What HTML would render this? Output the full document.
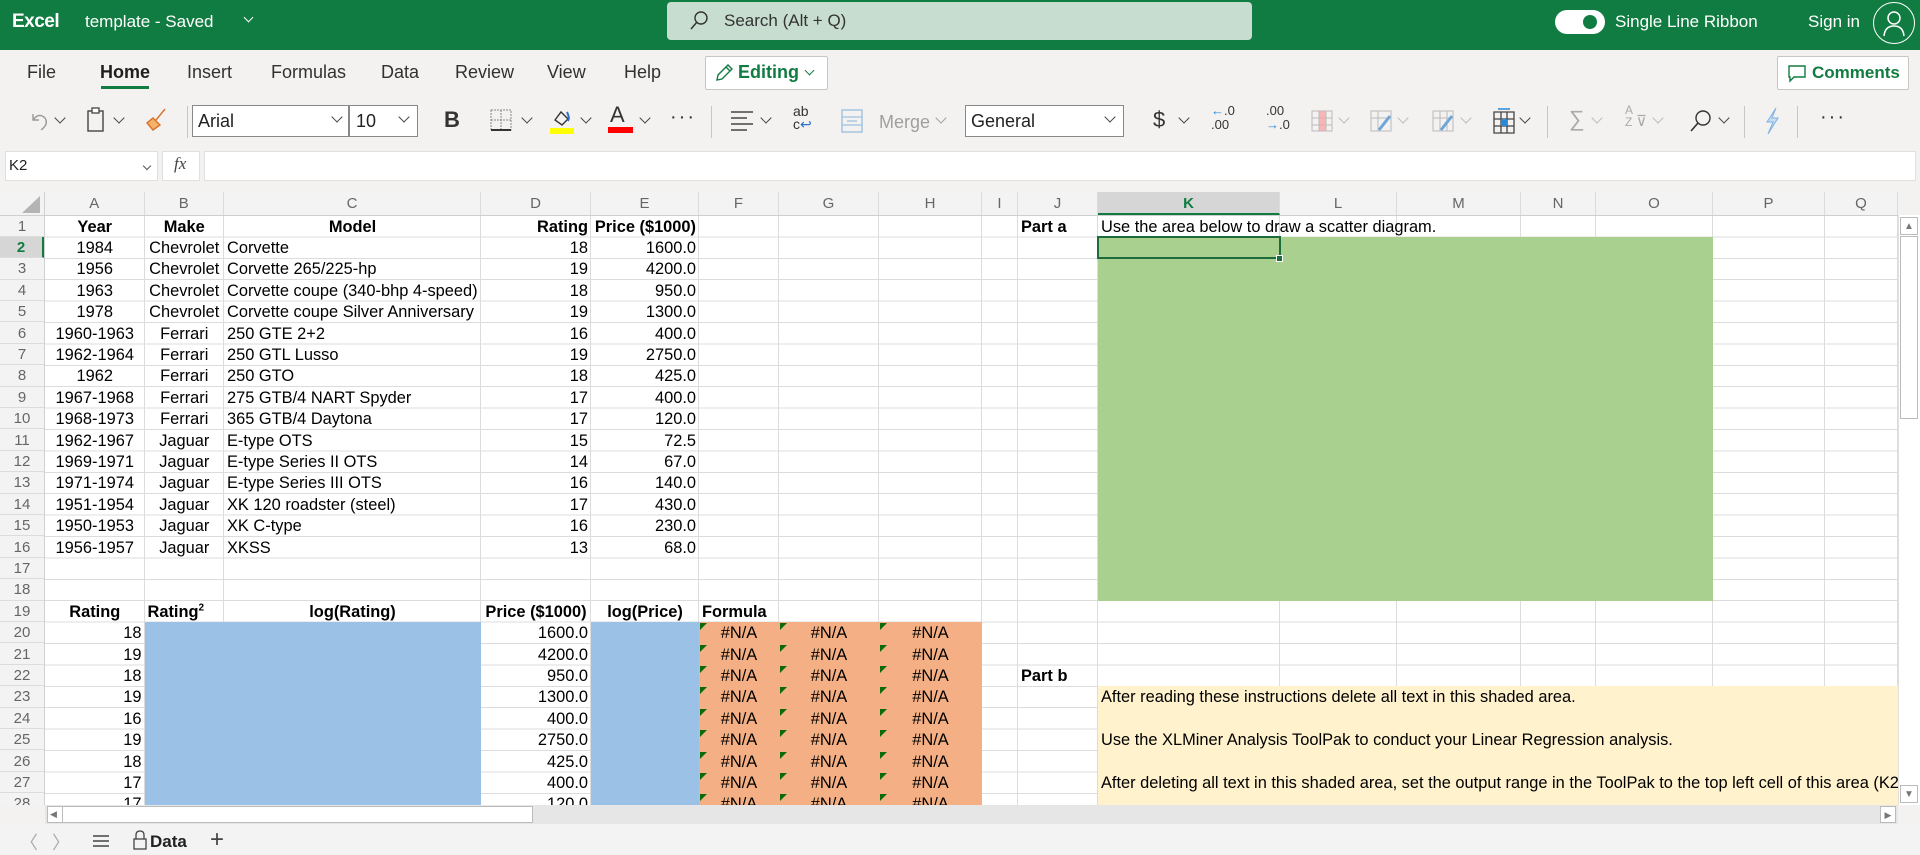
<!DOCTYPE html>
<html><head><meta charset="utf-8">
<style>
*{box-sizing:border-box;margin:0;padding:0}
body{width:1920px;height:853px;overflow:hidden;background:#f3f2f1;font-family:"Liberation Sans",Arial,sans-serif;position:relative}
.abs{position:absolute}
#top{left:0;top:0;width:1920px;height:50px;background:#117c41;color:#fff}
#tabs{left:0;top:50px;width:1920px;height:48px;background:#f3f2f1}
.tab{position:absolute;top:62px;font-size:18px;color:#323130}
#tb{left:0;top:98px;width:1920px;height:47px;background:#f3f2f1;box-shadow:0 2px 3px rgba(0,0,0,.12)}
.ic{position:absolute;color:#444;font-size:16px}
.chev{position:absolute;top:114px;width:8px;height:8px;border-right:1.5px solid #444;border-bottom:1.5px solid #444;transform:rotate(45deg)}
.sep{position:absolute;top:106px;width:1px;height:32px;background:#c8c6c4}
#grid{left:45px;top:215.5px;width:1853px;height:589.5px;overflow:hidden;background-color:#fff;background-image:repeating-linear-gradient(to bottom,transparent 0,transparent 20.4px,#dcdcdc 20.4px,#dcdcdc 21.4px)}
.vl{position:absolute;top:0;width:1px;height:600px;background:#dcdcdc}
.f{position:absolute}
.r{position:absolute;left:0;height:21.4px;width:1853px;font-size:16.4px;line-height:22px;color:#000;white-space:nowrap}
.r span{position:absolute;top:0;height:21.4px;overflow:hidden;padding:0 3px}
.A{left:0;width:99.5px}.B{left:99.5px;width:79.5px}.C{left:179px;width:257px}.D{left:436px;width:110px}.E{left:546px;width:108px}
.F{left:654px;width:80px}.G{left:734px;width:100px}.H{left:834px;width:103px}.J{left:973px;width:80px}.K{left:1053px;width:800px;overflow:visible!important}
.c{text-align:center}.rt{text-align:right}.b{font-weight:bold}
.na{text-align:center}
.na:before{content:"";position:absolute;left:1px;top:1px;border-top:7px solid #0b6a0b;border-right:7px solid transparent}
#rh{left:0;top:215.5px;width:45px;height:589.5px;overflow:hidden;background:#f3f3f3;border-right:1px solid #d0d0d0}
.rn{position:absolute;left:0;width:44px;height:21.4px;line-height:22px;text-align:center;font-size:15px;color:#666;border-bottom:1px solid #dcdcdc}
#ch{left:45px;top:192px;width:1853px;height:23.5px;background:#f3f3f3;border-bottom:1px solid #cfcfcf;overflow:hidden}
.cl{position:absolute;top:0;height:23px;line-height:23px;text-align:center;font-size:15px;color:#666;border-right:1px solid #dcdcdc}
</style></head><body>

<div id="top" class="abs">
 <div class="abs" style="left:12px;top:11px;font-size:19px;font-weight:bold;letter-spacing:-0.5px">Excel</div>
 <div class="abs" style="left:85px;top:12px;font-size:17px">template - Saved</div>
 <div class="abs" style="left:245px;top:14px;width:7px;height:7px;border-right:1.3px solid #fff;border-bottom:1.3px solid #fff;transform:rotate(45deg)"></div>
 <div class="abs" style="left:667px;top:2px;width:585px;height:38px;background:#c7ddd0;border-radius:4px"></div>
 <svg class="abs" style="left:688px;top:10px" width="22" height="22" viewBox="0 0 22 22"><circle cx="13" cy="8" r="6" fill="none" stroke="#333" stroke-width="1.4"/><path d="M9 12 L3 19" stroke="#333" stroke-width="1.5"/></svg>
 <div class="abs" style="left:724px;top:11px;font-size:17px;color:#333">Search (Alt + Q)</div>
 <div class="abs" style="left:1555px;top:10px;width:50px;height:24px;background:#fff;border-radius:12px"></div>
 <div class="abs" style="left:1583px;top:15px;width:14px;height:14px;background:#117c41;border-radius:7px"></div>
 <div class="abs" style="left:1615px;top:12px;font-size:17px">Single Line Ribbon</div>
 <div class="abs" style="left:1808px;top:12px;font-size:17px">Sign in</div>
 <div class="abs" style="left:1873px;top:2px;width:42px;height:42px;border:1.5px solid #fff;border-radius:50%"></div>
 <svg class="abs" style="left:1881px;top:9px" width="26" height="30" viewBox="0 0 26 30"><circle cx="13" cy="9" r="6" fill="none" stroke="#fff" stroke-width="1.5"/><path d="M3 27 Q4 17 13 17 Q22 17 23 27" fill="none" stroke="#fff" stroke-width="1.5"/></svg>
</div>

<div id="tabs" class="abs"></div>
<div class="tab" style="left:27px">File</div>
<div class="tab" style="left:100px;font-weight:bold;color:#201f1e">Home</div>
<div class="abs" style="left:101px;top:86px;width:48px;height:3px;background:#117c41"></div>
<div class="tab" style="left:187px">Insert</div>
<div class="tab" style="left:271px">Formulas</div>
<div class="tab" style="left:381px">Data</div>
<div class="tab" style="left:455px">Review</div>
<div class="tab" style="left:547px">View</div>
<div class="tab" style="left:624px">Help</div>
<div class="abs" style="left:705px;top:56px;width:123px;height:34px;background:#fff;border:1px solid #c8c6c4;border-radius:2px"></div>
<svg class="abs" style="left:714px;top:63px" width="20" height="20" viewBox="0 0 20 20"><path d="M3 17 L4 12 L14 2 L18 6 L8 16 Z M12 4 L16 8" fill="none" stroke="#117c41" stroke-width="1.4"/></svg>
<div class="abs" style="left:738px;top:62px;font-size:18px;font-weight:bold;color:#117c41">Editing</div>
<div class="abs" style="left:806px;top:67px;width:7px;height:7px;border-right:1.3px solid #117c41;border-bottom:1.3px solid #117c41;transform:rotate(45deg)"></div>
<div class="abs" style="left:1777px;top:56px;width:132px;height:34px;background:#fff;border:1px solid #c8c6c4;border-radius:2px"></div>
<svg class="abs" style="left:1787px;top:64px" width="20" height="20" viewBox="0 0 20 20"><path d="M2 2 H18 V13 H7 L3 17 V13 H2 Z" fill="none" stroke="#117c41" stroke-width="1.4"/></svg>
<div class="abs" style="left:1812px;top:63px;font-size:17px;font-weight:bold;color:#117c41">Comments</div>

<div id="tb" class="abs"></div>
<svg class="abs" style="left:25px;top:108px" width="26" height="26" viewBox="0 0 26 26"><path d="M8 6 L8 12 L14 12 M8 12 Q14 4 20 10 Q24 16 16 22" fill="none" stroke="#999" stroke-width="1.4"/></svg>
<div class="chev" style="left:56px"></div>
<svg class="abs" style="left:84px;top:106px" width="24" height="28" viewBox="0 0 24 28"><rect x="4" y="5" width="15" height="20" fill="none" stroke="#444" stroke-width="1.4"/><rect x="8" y="2" width="7" height="5" fill="#fff" stroke="#444" stroke-width="1.3"/></svg>
<div class="chev" style="left:115px"></div>
<svg class="abs" style="left:143px;top:106px" width="28" height="28" viewBox="0 0 28 28"><path d="M22 3 L13 14 M10 12 L17 19 L10 24 L4 17 Z" fill="#f3b26a" stroke="#d9712a" stroke-width="1.4"/></svg>
<div class="sep" style="left:187px"></div>
<div class="abs" style="left:192px;top:105px;width:157px;height:32px;background:#fff;border:1px solid #8a8886"></div>
<div class="abs" style="left:198px;top:111px;font-size:18px;color:#222">Arial</div>
<div class="chev" style="left:333px;top:113px"></div>
<div class="abs" style="left:349px;top:105px;width:69px;height:32px;background:#fff;border:1px solid #8a8886"></div>
<div class="abs" style="left:356px;top:111px;font-size:18px;color:#222">10</div>
<div class="chev" style="left:400px;top:113px"></div>
<div class="abs" style="left:444px;top:107px;font-size:22px;font-weight:bold;color:#333">B</div>
<svg class="abs" style="left:489px;top:108px" width="24" height="24" viewBox="0 0 24 24"><path d="M2 2 H22 V22 H2 Z M12 2 V22 M2 12 H22" fill="none" stroke="#888" stroke-width="1" stroke-dasharray="2 1"/><path d="M2 22 H22" stroke="#333" stroke-width="2"/></svg>
<div class="chev" style="left:523px"></div>
<svg class="abs" style="left:549px;top:106px" width="26" height="28" viewBox="0 0 26 28"><path d="M6 14 L12 6 L19 13 L13 19 Z" fill="none" stroke="#333" stroke-width="1.4"/><path d="M18 6 Q21 12 19 15" stroke="#2a6fc9" stroke-width="2" fill="none"/><rect x="1" y="22" width="24" height="6" fill="#ffff00"/></svg>
<div class="chev" style="left:582px"></div>
<div class="abs" style="left:610px;top:102px;font-size:22px;color:#333">A</div>
<div class="abs" style="left:608px;top:127px;width:25px;height:6px;background:#ff0000"></div>
<div class="chev" style="left:641px"></div>
<div class="abs" style="left:670px;top:106px;font-size:20px;color:#333;letter-spacing:2px">···</div>
<div class="sep" style="left:711px"></div>
<svg class="abs" style="left:730px;top:110px" width="24" height="22" viewBox="0 0 24 22"><path d="M1 2 H23 M1 8 H17 M1 14 H23 M1 20 H17" stroke="#444" stroke-width="1.5"/></svg>
<div class="chev" style="left:762px"></div>
<div class="abs" style="left:793px;top:105px;font-size:14px;line-height:13px;color:#333">ab<br>c<span style="color:#2a6fc9">↩</span></div>
<svg class="abs" style="left:840px;top:108px" width="24" height="26" viewBox="0 0 24 26"><rect x="2" y="2" width="20" height="22" fill="none" stroke="#9fc2e0" stroke-width="1.4"/><path d="M2 9 H22 M2 17 H22 M7 13 H17" stroke="#9fc2e0" stroke-width="1.3"/></svg>
<div class="abs" style="left:879px;top:112px;font-size:18px;color:#a19f9d">Merge</div>
<div class="chev" style="left:937px;border-color:#a19f9d"></div>
<div class="abs" style="left:965px;top:105px;width:159px;height:32px;background:#fff;border:1px solid #8a8886"></div>
<div class="abs" style="left:971px;top:111px;font-size:18px;color:#222">General</div>
<div class="chev" style="left:1106px;top:113px"></div>
<div class="abs" style="left:1153px;top:107px;font-size:22px;color:#333">$</div>
<div class="chev" style="left:1180px"></div>
<div class="abs" style="left:1211px;top:104px;font-size:13px;line-height:14px;color:#333"><span style="color:#2a8ad8">←</span>.0<br>.00</div>
<div class="abs" style="left:1266px;top:104px;font-size:13px;line-height:14px;color:#333">.00<br><span style="color:#2a8ad8">→</span>.0</div>
<svg class="abs" style="left:1311px;top:110px" width="22" height="22" viewBox="0 0 22 22"><path d="M1 1 H21 V21 H1 Z M1 8 H21 M1 15 H21 M8 1 V21 M15 1 V21" fill="none" stroke="#bbb"/><rect x="8" y="1" width="7" height="20" fill="#f4a8a8" opacity=".8"/></svg>
<div class="chev" style="left:1340px;border-color:#bbb"></div>
<svg class="abs" style="left:1370px;top:110px" width="24" height="24" viewBox="0 0 24 24"><path d="M1 1 H21 V21 H1 Z M1 8 H21 M8 1 V21" fill="none" stroke="#bbb"/><path d="M20 6 L9 20" stroke="#6fa6d8" stroke-width="3"/></svg>
<div class="chev" style="left:1399px;border-color:#bbb"></div>
<svg class="abs" style="left:1432px;top:110px" width="24" height="24" viewBox="0 0 24 24"><path d="M1 1 H21 V21 H1 Z M1 8 H21 M8 1 V21 M15 1 V21" fill="none" stroke="#bbb"/><path d="M20 6 L9 20" stroke="#6fa6d8" stroke-width="3"/></svg>
<div class="chev" style="left:1462px;border-color:#bbb"></div>
<svg class="abs" style="left:1492px;top:107px" width="24" height="28" viewBox="0 0 24 28"><path d="M2 5 H22 V26 H2 Z M2 12 H22 M2 19 H22 M9 5 V26 M15 5 V26" fill="none" stroke="#444" stroke-width="1.3"/><rect x="9" y="12" width="6" height="7" fill="#2a8ad8"/><path d="M6 2 H18" stroke="#2a8ad8" stroke-width="1.5"/></svg>
<div class="chev" style="left:1521px"></div>
<div class="sep" style="left:1547px"></div>
<div class="abs" style="left:1569px;top:106px;font-size:22px;color:#aaa">∑</div>
<div class="chev" style="left:1593px;border-color:#bbb"></div>
<div class="abs" style="left:1625px;top:104px;font-size:12px;line-height:12px;color:#aaa">A<br>Z</div>
<div class="abs" style="left:1636px;top:112px;font-size:15px;color:#aaa">⊽</div>
<div class="chev" style="left:1654px;border-color:#bbb"></div>
<svg class="abs" style="left:1688px;top:108px" width="26" height="26" viewBox="0 0 26 26"><circle cx="15" cy="10" r="7" fill="none" stroke="#333" stroke-width="1.4"/><path d="M10 15 L3 23" stroke="#333" stroke-width="1.6"/></svg>
<div class="chev" style="left:1720px"></div>
<div class="sep" style="left:1744px"></div>
<svg class="abs" style="left:1762px;top:106px" width="20" height="30" viewBox="0 0 20 30"><path d="M14 2 L5 16 H11 L6 28 L16 12 H10 Z" fill="#c8ddf3" stroke="#7fb0e0" stroke-width="1"/></svg>
<div class="sep" style="left:1797px"></div>
<div class="abs" style="left:1820px;top:106px;font-size:20px;color:#333;letter-spacing:2px">···</div>

<div class="abs" style="left:0;top:145px;width:1920px;height:47px;background:#f3f2f1"></div>
<div class="abs" style="left:5px;top:151px;width:153px;height:30px;background:#fff;border:1px solid #e1dfdd"></div>
<div class="abs" style="left:9px;top:157px;font-size:15px;color:#222">K2</div>
<div class="abs" style="left:144px;top:163px;width:6px;height:6px;border-right:1.2px solid #555;border-bottom:1.2px solid #555;transform:rotate(45deg)"></div>
<div class="abs" style="left:162px;top:151px;width:38px;height:30px;background:#fff;border:1px solid #e1dfdd"></div>
<div class="abs" style="left:174px;top:154px;font-size:17px;font-style:italic;font-family:'Liberation Serif',serif;color:#444">fx</div>
<div class="abs" style="left:204px;top:151px;width:1712px;height:30px;background:#fff;border:1px solid #e1dfdd"></div>

<div class="abs" style="left:0;top:192px;width:45px;height:23.5px;background:#f3f3f3;border-right:1px solid #d0d0d0;border-bottom:1px solid #cfcfcf"></div>
<svg class="abs" style="left:22px;top:196px" width="20" height="18"><path d="M18 0 V17 H0 Z" fill="#b4b4b4"/></svg>
<div id="ch" class="abs">
<div class="cl" style="left:0;width:99.5px">A</div><div class="cl" style="left:99.5px;width:79.5px">B</div><div class="cl" style="left:179px;width:257px">C</div><div class="cl" style="left:436px;width:110px">D</div><div class="cl" style="left:546px;width:108px">E</div><div class="cl" style="left:654px;width:80px">F</div><div class="cl" style="left:734px;width:100px">G</div><div class="cl" style="left:834px;width:103px">H</div><div class="cl" style="left:937px;width:36px">I</div><div class="cl" style="left:973px;width:80px">J</div>
<div class="cl" style="left:1053px;width:182px;background:#d6d6d6;color:#117c41;font-weight:bold;border-bottom:2px solid #117c41">K</div>
<div class="cl" style="left:1235px;width:117px">L</div><div class="cl" style="left:1352px;width:124px">M</div><div class="cl" style="left:1476px;width:75px">N</div><div class="cl" style="left:1551px;width:117px">O</div><div class="cl" style="left:1668px;width:112px">P</div><div class="cl" style="left:1780px;width:73px">Q</div>
</div>

<div id="rh" class="abs">
<div class="rn" style="top:0">1</div>
<div class="rn" style="top:21.4px;background:#d6d6d6;color:#117c41;font-weight:bold;border-right:2px solid #117c41">2</div>
<div class="rn" style="top:42.8px">3</div><div class="rn" style="top:64.2px">4</div><div class="rn" style="top:85.6px">5</div><div class="rn" style="top:107px">6</div><div class="rn" style="top:128.4px">7</div><div class="rn" style="top:149.8px">8</div><div class="rn" style="top:171.2px">9</div><div class="rn" style="top:192.6px">10</div><div class="rn" style="top:214px">11</div><div class="rn" style="top:235.4px">12</div><div class="rn" style="top:256.8px">13</div><div class="rn" style="top:278.2px">14</div><div class="rn" style="top:299.6px">15</div><div class="rn" style="top:321px">16</div><div class="rn" style="top:342.4px">17</div><div class="rn" style="top:363.8px">18</div><div class="rn" style="top:385.2px">19</div><div class="rn" style="top:406.6px">20</div><div class="rn" style="top:428px">21</div><div class="rn" style="top:449.4px">22</div><div class="rn" style="top:470.8px">23</div><div class="rn" style="top:492.2px">24</div><div class="rn" style="top:513.6px">25</div><div class="rn" style="top:535px">26</div><div class="rn" style="top:556.4px">27</div><div class="rn" style="top:577.8px">28</div>
</div>

<div id="grid" class="abs">
<div class="vl" style="left:98.5px"></div><div class="vl" style="left:178px"></div><div class="vl" style="left:435px"></div><div class="vl" style="left:545px"></div><div class="vl" style="left:653px"></div><div class="vl" style="left:733px"></div><div class="vl" style="left:833px"></div><div class="vl" style="left:936px"></div><div class="vl" style="left:972px"></div><div class="vl" style="left:1052px"></div><div class="vl" style="left:1234px"></div><div class="vl" style="left:1351px"></div><div class="vl" style="left:1475px"></div><div class="vl" style="left:1550px"></div><div class="vl" style="left:1667px"></div><div class="vl" style="left:1779px"></div><div class="vl" style="left:1852px"></div>
<div class="f" style="left:1053px;top:21.4px;width:615px;height:363.8px;background:#a9d08e"></div>
<div class="f" style="left:1053px;top:470.8px;width:800px;height:130px;background:#fff2cc"></div>
<div class="f" style="left:99.5px;top:406.6px;width:336.5px;height:200px;background:#9bc2e6"></div>
<div class="f" style="left:546px;top:406.6px;width:108px;height:200px;background:#9bc2e6"></div>
<div class="f" style="left:654px;top:406.6px;width:283px;height:200px;background:#f4b084"></div>

<div class="r" style="top:0"><span class="A c b">Year</span><span class="B c b">Make</span><span class="C c b">Model</span><span class="D rt b">Rating</span><span class="E rt b">Price ($1000)</span><span class="J b">Part a</span><span class="K">Use the area below to draw a scatter diagram.</span></div>
<div class="r" style="top:21.4px"><span class="A c">1984</span><span class="B c">Chevrolet</span><span class="C">Corvette</span><span class="D rt">18</span><span class="E rt">1600.0</span></div>
<div class="r" style="top:42.8px"><span class="A c">1956</span><span class="B c">Chevrolet</span><span class="C">Corvette 265/225-hp</span><span class="D rt">19</span><span class="E rt">4200.0</span></div>
<div class="r" style="top:64.2px"><span class="A c">1963</span><span class="B c">Chevrolet</span><span class="C">Corvette coupe (340-bhp 4-speed)</span><span class="D rt">18</span><span class="E rt">950.0</span></div>
<div class="r" style="top:85.6px"><span class="A c">1978</span><span class="B c">Chevrolet</span><span class="C">Corvette coupe Silver Anniversary</span><span class="D rt">19</span><span class="E rt">1300.0</span></div>
<div class="r" style="top:107px"><span class="A c">1960-1963</span><span class="B c">Ferrari</span><span class="C">250 GTE 2+2</span><span class="D rt">16</span><span class="E rt">400.0</span></div>
<div class="r" style="top:128.4px"><span class="A c">1962-1964</span><span class="B c">Ferrari</span><span class="C">250 GTL Lusso</span><span class="D rt">19</span><span class="E rt">2750.0</span></div>
<div class="r" style="top:149.8px"><span class="A c">1962</span><span class="B c">Ferrari</span><span class="C">250 GTO</span><span class="D rt">18</span><span class="E rt">425.0</span></div>
<div class="r" style="top:171.2px"><span class="A c">1967-1968</span><span class="B c">Ferrari</span><span class="C">275 GTB/4 NART Spyder</span><span class="D rt">17</span><span class="E rt">400.0</span></div>
<div class="r" style="top:192.6px"><span class="A c">1968-1973</span><span class="B c">Ferrari</span><span class="C">365 GTB/4 Daytona</span><span class="D rt">17</span><span class="E rt">120.0</span></div>
<div class="r" style="top:214px"><span class="A c">1962-1967</span><span class="B c">Jaguar</span><span class="C">E-type OTS</span><span class="D rt">15</span><span class="E rt">72.5</span></div>
<div class="r" style="top:235.4px"><span class="A c">1969-1971</span><span class="B c">Jaguar</span><span class="C">E-type Series II OTS</span><span class="D rt">14</span><span class="E rt">67.0</span></div>
<div class="r" style="top:256.8px"><span class="A c">1971-1974</span><span class="B c">Jaguar</span><span class="C">E-type Series III OTS</span><span class="D rt">16</span><span class="E rt">140.0</span></div>
<div class="r" style="top:278.2px"><span class="A c">1951-1954</span><span class="B c">Jaguar</span><span class="C">XK 120 roadster (steel)</span><span class="D rt">17</span><span class="E rt">430.0</span></div>
<div class="r" style="top:299.6px"><span class="A c">1950-1953</span><span class="B c">Jaguar</span><span class="C">XK C-type</span><span class="D rt">16</span><span class="E rt">230.0</span></div>
<div class="r" style="top:321px"><span class="A c">1956-1957</span><span class="B c">Jaguar</span><span class="C">XKSS</span><span class="D rt">13</span><span class="E rt">68.0</span></div>
<div class="r" style="top:385.2px"><span class="A c b">Rating</span><span class="B b">Rating<sup style="font-size:10px;line-height:0">2</sup></span><span class="C c b">log(Rating)</span><span class="D c b">Price ($1000)</span><span class="E c b">log(Price)</span><span class="F b">Formula</span></div>
<div class="r" style="top:406.6px"><span class="A rt">18</span><span class="D rt">1600.0</span><span class="F na">#N/A</span><span class="G na">#N/A</span><span class="H na">#N/A</span></div>
<div class="r" style="top:428px"><span class="A rt">19</span><span class="D rt">4200.0</span><span class="F na">#N/A</span><span class="G na">#N/A</span><span class="H na">#N/A</span></div>
<div class="r" style="top:449.4px"><span class="A rt">18</span><span class="D rt">950.0</span><span class="F na">#N/A</span><span class="G na">#N/A</span><span class="H na">#N/A</span><span class="J b">Part b</span></div>
<div class="r" style="top:470.8px"><span class="A rt">19</span><span class="D rt">1300.0</span><span class="F na">#N/A</span><span class="G na">#N/A</span><span class="H na">#N/A</span><span class="K">After reading these instructions delete all text in this shaded area.</span></div>
<div class="r" style="top:492.2px"><span class="A rt">16</span><span class="D rt">400.0</span><span class="F na">#N/A</span><span class="G na">#N/A</span><span class="H na">#N/A</span></div>
<div class="r" style="top:513.6px"><span class="A rt">19</span><span class="D rt">2750.0</span><span class="F na">#N/A</span><span class="G na">#N/A</span><span class="H na">#N/A</span><span class="K">Use the XLMiner Analysis ToolPak to conduct your Linear Regression analysis.</span></div>
<div class="r" style="top:535px"><span class="A rt">18</span><span class="D rt">425.0</span><span class="F na">#N/A</span><span class="G na">#N/A</span><span class="H na">#N/A</span></div>
<div class="r" style="top:556.4px"><span class="A rt">17</span><span class="D rt">400.0</span><span class="F na">#N/A</span><span class="G na">#N/A</span><span class="H na">#N/A</span><span class="K">After deleting all text in this shaded area, set the output range in the ToolPak to the top left cell of this area (K23).</span></div>
<div class="r" style="top:577.8px"><span class="A rt">17</span><span class="D rt">120.0</span><span class="F na">#N/A</span><span class="G na">#N/A</span><span class="H na">#N/A</span></div>
<div class="f" style="left:1052px;top:20.4px;width:184px;height:23px;border:2px solid #1e6b3c"></div>
<div class="f" style="left:1231px;top:39.5px;width:7px;height:7px;background:#1e6b3c;border:1px solid #fff"></div>
</div>

<div class="abs" style="left:1898px;top:215px;width:22px;height:590px;background:#fff;border-left:1px solid #e0e0e0"></div>
<div class="abs" style="left:1900px;top:217px;width:18px;height:18px;border:1px solid #bbb;background:#fff;font-size:10px;color:#777;text-align:center;line-height:17px">▲</div>
<div class="abs" style="left:1900px;top:236px;width:18px;height:183px;border:1px solid #bbb;background:#fff"></div>
<div class="abs" style="left:1900px;top:785px;width:18px;height:18px;border:1px solid #bbb;background:#fff;font-size:10px;color:#777;text-align:center;line-height:17px">▼</div>
<div class="abs" style="left:45px;top:805px;width:1853px;height:19px;background:#e6e6e6"></div>
<div class="abs" style="left:47px;top:806px;width:486px;height:17px;background:#fff;border:1px solid #bbb"></div>
<div class="abs" style="left:50px;top:807px;width:13px;height:15px;border-right:1px solid #bbb;font-size:9px;color:#777;line-height:15px">◀</div>
<div class="abs" style="left:1880px;top:806px;width:16px;height:17px;background:#fff;border:1px solid #bbb;font-size:9px;color:#777;text-align:center;line-height:16px">▶</div>
<div class="abs" style="left:0;top:824px;width:1920px;height:29px;background:#f3f3f3"></div>
<div class="abs" style="left:20px;top:829px;font-size:18px;color:#aaa">〈</div>
<div class="abs" style="left:52px;top:829px;font-size:18px;color:#aaa">〉</div>
<svg class="abs" style="left:93px;top:834px" width="16" height="14"><path d="M0 2 H16 M0 7 H16 M0 12 H16" stroke="#444" stroke-width="1.4"/></svg>
<svg class="abs" style="left:133px;top:830px" width="14" height="20" viewBox="0 0 14 20"><path d="M3 9 V5 Q3 1 7 1 Q11 1 11 5 V9" fill="none" stroke="#444" stroke-width="1.3"/><rect x="1" y="9" width="12" height="10" fill="none" stroke="#444" stroke-width="1.3"/></svg>
<div class="abs" style="left:150px;top:832px;font-size:17px;font-weight:bold;color:#222">Data</div>
<div class="abs" style="left:210px;top:826px;font-size:24px;color:#444;font-weight:300">+</div>
</body></html>
